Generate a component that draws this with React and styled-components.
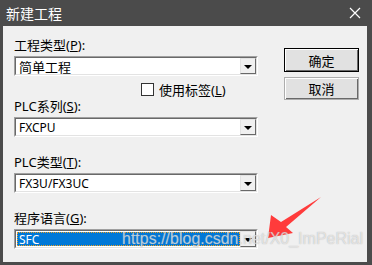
import React from 'react'
import styled, { createGlobalStyle } from 'styled-components'

const Global = createGlobalStyle`
  html, body {
    margin: 0;
    padding: 0;
    background: #4b4b4b;
  }
  body {
    font-family: "Noto Sans", "Noto Sans CJK SC", sans-serif;
    font-size: 12px;
    color: #000;
  }
`

const Frame = styled.div`
  position: relative;
  width: 372px;
  height: 265px;
  box-sizing: border-box;
  background: #4b4b4b;
  display: flex;
  flex-direction: column;
  padding: 0 5px 3px 3px;
  overflow: hidden;
`

const TitleBar = styled.div`
  height: 26px;
  flex: none;
  display: flex;
  align-items: center;
  justify-content: space-between;
  color: #fff;
  font-family: "Noto Sans CJK SC", sans-serif;
  font-size: 14px;
  padding: 0 6px 0 3px;
`

const Body = styled.div`
  flex: 1;
  background: #f0f0f0;
  display: flex;
  padding: 11px 0 0 11px;
  gap: 26px;
`

const Left = styled.div`
  width: 244px;
  display: flex;
  flex-direction: column;
`

const Right = styled.div`
  width: 75px;
  padding-top: 11px;
  display: flex;
  flex-direction: column;
  gap: 5px;
`

const Label = styled.div`
  height: 14px;
  line-height: 14px;
  font-family: "Noto Sans", "Noto Sans CJK SC", sans-serif;
  font-size: 13px;
  margin-top: ${p => p.$gap}px;
  white-space: nowrap;

  u {
    text-decoration: underline;
  }
`

const Combo = styled.div`
  margin-top: 4px;
  height: 20px;
  box-sizing: border-box;
  border-top: 1px solid #a0a0a0;
  border-left: 1px solid #a0a0a0;
  border-right: 1px solid #fff;
  border-bottom: 1px solid #fff;
  display: flex;
`

const ComboInner = styled.div`
  flex: 1;
  display: flex;
  align-items: stretch;
  background: #fff;
  border-top: 1px solid #696969;
  border-left: 1px solid #696969;
  border-right: 1px solid #e3e3e3;
  border-bottom: 1px solid #e3e3e3;
`

const Value = styled.div`
  flex: 1;
  display: flex;
  align-items: center;
  padding-left: 2px;
  font-size: ${p => (p.$cjk ? 13 : 12)}px;
  font-family: ${p => (p.$cjk ? '"Noto Sans CJK SC", sans-serif' : '"Noto Sans", sans-serif')};
  margin: 1px 0 1px 1px;
  ${p => p.$selected && `
    background: #0078d7;
    color: #fff;
    outline: 1px dotted #f0a020;
    outline-offset: -1px;
  `}
`

const DropButton = styled.div`
  width: 16px;
  box-sizing: border-box;
  background: #f0f0f0;
  border-top: 1px solid #e3e3e3;
  border-left: 1px solid #e3e3e3;
  border-right: 1px solid #696969;
  border-bottom: 1px solid #696969;
  display: flex;
  align-items: center;
  justify-content: center;

  &::after {
    content: '';
    border-left: 4px solid transparent;
    border-right: 4px solid transparent;
    border-top: 4px solid #000;
    margin-top: 1px;
  }
`

const CheckRow = styled.div`
  margin-top: 7px;
  height: 13px;
  display: flex;
  align-items: center;
  padding-left: 127px;
  gap: 5px;
`

const CheckBox = styled.span`
  width: 13px;
  height: 13px;
  box-sizing: border-box;
  border: 1px solid #333;
  background: #fff;
`

const Button = styled.div`
  height: ${p => p.$h}px;
  box-sizing: border-box;
  background: #e1e1e1;
  border: 1px solid ${p => (p.$default ? '#000' : '#adadad')};
  box-shadow: inset 1px 1px 0 #fff, inset -1px -1px 0 #696969;
  display: flex;
  align-items: center;
  justify-content: center;
  font-family: "Noto Sans CJK SC", sans-serif;
  font-size: 13px;
`

const Close = styled.svg`
  display: block;
`

const Watermark = styled.div`
  position: absolute;
  left: 122px;
  top: 230px;
  font-family: "Liberation Sans", Arial, sans-serif;
  font-size: 16px;
  color: rgba(255, 255, 255, 0.6);
  text-shadow: 0 0 1px rgba(140, 140, 140, 0.7);
  white-space: nowrap;
  pointer-events: none;
`

const Arrow = styled.svg`
  position: absolute;
  left: 0;
  top: 0;
  pointer-events: none;
`

const ComboBox = ({ value, cjk, selected }) => (
  <Combo>
    <ComboInner>
      <Value $cjk={cjk} $selected={selected}>{value}</Value>
      <DropButton />
    </ComboInner>
  </Combo>
)

export default function App() {
  return (
    <>
      <Global />
      <Frame>
        <TitleBar>
          <span>新建工程</span>
          <Close width="12" height="12" viewBox="0 0 12 12">
            <path d="M1 1L11 11M11 1L1 11" stroke="#fff" strokeWidth="1.2" />
          </Close>
        </TitleBar>
        <Body>
          <Left>
            <Label $gap={1}>工程类型(<u>P</u>):</Label>
            <ComboBox value="简单工程" cjk />
            <CheckRow>
              <CheckBox />
              <Label $gap={0}>使用标签(<u>L</u>)</Label>
            </CheckRow>
            <Label $gap={3}>PLC系列(<u>S</u>):</Label>
            <ComboBox value="FXCPU" />
            <Label $gap={18}>PLC类型(<u>T</u>):</Label>
            <ComboBox value="FX3U/FX3UC" />
            <Label $gap={18}>程序语言(<u>G</u>):</Label>
            <ComboBox value="SFC" selected />
          </Left>
          <Right>
            <Button $h={24} $default>确定</Button>
            <Button $h={23}>取消</Button>
          </Right>
        </Body>
        <Arrow width="372" height="265" viewBox="0 0 372 265">
          <polygon
            points="268,238 271,215 281,222 321,197 286,227 293,233"
            fill="#ff3b3b"
          />
        </Arrow>
        <Watermark>https://blog.csdn.net/X0_ImPeRial</Watermark>
      </Frame>
    </>
  )
}
